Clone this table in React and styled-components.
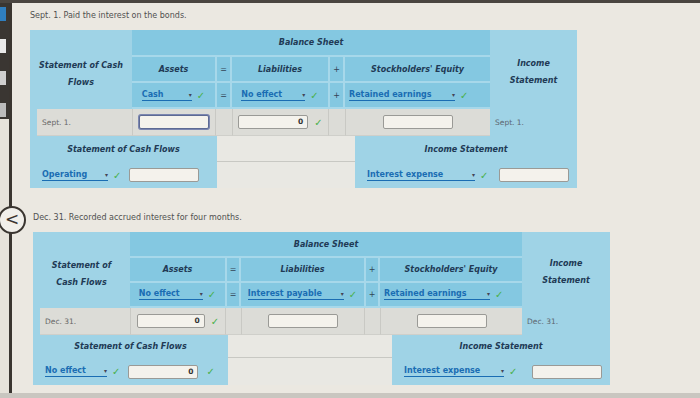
import React from "react";
import styled, { createGlobalStyle } from "styled-components";

const GlobalStyle = createGlobalStyle`
  html, body {
    margin: 0;
    padding: 0;
    background: #ebe8e1;
    font-family: "DejaVu Sans", Verdana, sans-serif;
  }
`;

function Dropdown({ label, width }) {
  return (
    <DropWrap>
      <DropLink style={{ width }}>
        <span>{label}</span>
        <Arrow>▾</Arrow>
      </DropLink>
      <Check>✓</Check>
    </DropWrap>
  );
}

function Table({ t }) {
  return (
    <Block>
      <Caption>{t.caption}</Caption>
      <Panel style={{ width: t.width }}>
        <Grid $cols={t.cols} $rows={t.rows}>
          <SideHead>
            {t.scfTitle.map((line) => (
              <div key={line}>{line}</div>
            ))}
          </SideHead>
          <BandHead>Balance Sheet</BandHead>
          <IncomeHead>
            <div>Income</div>
            <div>Statement</div>
          </IncomeHead>

          <HeadCell>Assets</HeadCell>
          <OpCell>=</OpCell>
          <HeadCell>Liabilities</HeadCell>
          <OpCell>+</OpCell>
          <HeadCell>Stockholders' Equity</HeadCell>

          <PickCell>
            <Dropdown label={t.assets} width={t.dw[0]} />
          </PickCell>
          <OpCell>=</OpCell>
          <PickCell>
            <Dropdown label={t.liab} width={t.dw[1]} />
          </PickCell>
          <OpCell>+</OpCell>
          <PickCell $left>
            <Dropdown label="Retained earnings" width={t.dw[2]} />
          </PickCell>

          <DateCell>{t.date}</DateCell>
          <GrayCell>
            <Field $w={t.iw[0]} $focus={t.focus}>{t.vals[0]}</Field>
            {t.vals[0] && <Check>✓</Check>}
          </GrayCell>
          <GrayCell />
          <GrayCell>
            <Field $w={t.iw[1]}>{t.vals[1]}</Field>
            {t.vals[1] && <Check>✓</Check>}
          </GrayCell>
          <GrayCell />
          <GrayCell>
            <Field $w={t.iw[2]} />
          </GrayCell>
          <IncomeDate>{t.date}</IncomeDate>
        </Grid>

        <Bottom $cols={t.bcols} $rows={t.brows}>
          <BlueSection $rows={t.brows}>
            <SubTitle>Statement of Cash Flows</SubTitle>
            <SectionRow>
              <Dropdown label={t.scf} width={t.dw[3]} />
              <Field $w={70}>{t.vals[2]}</Field>
              {t.vals[2] && <Check>✓</Check>}
            </SectionRow>
          </BlueSection>
          <BlankSection $rows={t.brows}>
            <BlankRow />
            <BlankRow />
          </BlankSection>
          <BlueSection $rows={t.brows}>
            <SubTitle>Income Statement</SubTitle>
            <SectionRow $spread>
              <Dropdown label="Interest expense" width={t.dw[4]} />
              <Field $w={70} />
            </SectionRow>
          </BlueSection>
        </Bottom>
      </Panel>
    </Block>
  );
}

const tables = [
  {
    caption: "Sept. 1. Paid the interest on the bonds.",
    width: 547,
    cols: "102px 83px 17px 96px 17px 145px 87px",
    rows: "27px 26px 26px 27px",
    bcols: "187px 138px 222px",
    brows: "26px 26px",
    scfTitle: ["Statement of Cash", "Flows"],
    assets: "Cash",
    liab: "No effect",
    scf: "Operating",
    date: "Sept. 1.",
    dw: [50, 64, 106, 66, 108],
    iw: [70, 70, 70],
    vals: ["", "0", ""],
    focus: true,
  },
  {
    caption: "Dec. 31. Recorded accrued interest for four months.",
    width: 577,
    cols: "97px 95px 16px 123px 16px 142px 88px",
    rows: "26px 25px 25px 27px",
    bcols: "195px 164px 218px",
    brows: "23px 27px",
    scfTitle: ["Statement of", "Cash Flows"],
    assets: "No effect",
    liab: "Interest payable",
    scf: "No effect",
    date: "Dec. 31.",
    dw: [64, 96, 106, 62, 100],
    iw: [68, 70, 70],
    vals: ["0", "", "0"],
  },
];

export default function App() {
  return (
    <Screen>
      <GlobalStyle />
      <Rail>
        <RailTop>
          <RailMark $c="#2f7fc0" />
          <RailMark $c="#e9e9e9" />
          <RailMark $c="#cfcfcf" />
          <RailMark $c="#bcbcbc" />
        </RailTop>
        <BackButton>&lt;</BackButton>
      </Rail>
      <Content>
        {tables.map((t) => (
          <Table key={t.caption} t={t} />
        ))}
      </Content>
      <BottomBand />
    </Screen>
  );
}

const Screen = styled.div`
  position: relative;
  width: 700px;
  height: 398px;
  overflow: hidden;
  display: flex;
  border-top: 3px solid #4a4540;
  box-sizing: border-box;
`;

const Rail = styled.div`
  position: relative;
  width: 9px;
  flex: none;
  border-right: 3px solid #3a3530;
  background: #e6e2da;
`;

const RailTop = styled.div`
  height: 112px;
  background: #3a3632;
  display: flex;
  flex-direction: column;
  gap: 18px;
  padding-top: 4px;
`;

const RailMark = styled.div`
  width: 6px;
  height: 14px;
  background: ${(p) => p.$c};
`;

const BackButton = styled.div`
  position: absolute;
  left: -2px;
  top: 203px;
  width: 24px;
  height: 24px;
  border-radius: 50%;
  border: 2px solid #3a3530;
  background: #f1efea;
  color: #3a3530;
  font-size: 17px;
  line-height: 23px;
  text-align: center;
  z-index: 2;
`;

const Content = styled.div`
  padding: 6px 0 0 18px;
  display: flex;
  flex-direction: column;
  gap: 23px;
`;

const BottomBand = styled.div`
  position: absolute;
  left: 0;
  right: 0;
  bottom: 0;
  height: 5px;
  background: #c9c6c0;
`;

const Block = styled.div`
  display: flex;
  flex-direction: column;
  &:nth-child(2) {
    padding-left: 3px;
  }
`;

const Caption = styled.div`
  font-size: 8px;
  color: #505050;
  height: 21px;
  line-height: 14px;
`;

const Panel = styled.div`
  background: #9fd3e6;
  color: #213a55;
`;

const Grid = styled.div`
  display: grid;
  grid-template-columns: ${(p) => p.$cols};
  grid-template-rows: ${(p) => p.$rows};
`;

const headText = `
  font-weight: bold;
  font-style: italic;
  font-size: 8px;
  color: #213a55;
`;

const SideHead = styled.div`
  ${headText}
  grid-row: 1 / 4;
  display: flex;
  flex-direction: column;
  justify-content: center;
  align-items: center;
  line-height: 17px;
  padding-top: 8px;
`;

const BandHead = styled.div`
  ${headText}
  grid-column: 2 / 7;
  background: #84c8e1;
  display: flex;
  align-items: center;
  justify-content: center;
  border-bottom: 2px solid #a7d8ea;
`;

const IncomeHead = styled.div`
  ${headText}
  grid-column: 7;
  grid-row: 1 / 4;
  display: flex;
  flex-direction: column;
  justify-content: center;
  align-items: center;
  line-height: 17px;
  padding-top: 4px;
`;

const HeadCell = styled.div`
  ${headText}
  background: #84c8e1;
  display: flex;
  align-items: center;
  justify-content: center;
  border-bottom: 2px solid #a7d8ea;
`;

const OpCell = styled.div`
  background: #84c8e1;
  border-left: 2px solid #a7d8ea;
  border-right: 2px solid #a7d8ea;
  border-bottom: 2px solid #a7d8ea;
  font-size: 8px;
  color: #345;
  display: flex;
  align-items: center;
  justify-content: center;
`;

const PickCell = styled.div`
  background: #84c8e1;
  border-bottom: 2px solid #a7d8ea;
  display: flex;
  align-items: center;
  justify-content: ${(p) => (p.$left ? "flex-start" : "center")};
  padding-left: ${(p) => (p.$left ? "4px" : "0")};
`;

const DateCell = styled.div`
  background: #dcdcd7;
  margin-left: 7px;
  font-size: 7.5px;
  color: #666;
  display: flex;
  align-items: center;
  padding-left: 5px;
  border-bottom: 1px solid #cfcfca;
`;

const GrayCell = styled.div`
  background: #dcdcd7;
  border-left: 1px solid #c9c9c4;
  border-bottom: 1px solid #cfcfca;
  display: flex;
  align-items: center;
  justify-content: center;
  gap: 6px;
`;

const IncomeDate = styled.div`
  font-size: 7.5px;
  color: #5b6670;
  display: flex;
  align-items: center;
  padding-left: 5px;
`;

const Bottom = styled.div`
  display: grid;
  grid-template-columns: ${(p) => p.$cols};
`;

const BlueSection = styled.div`
  display: grid;
  grid-template-rows: ${(p) => p.$rows};
`;

const SubTitle = styled.div`
  ${headText}
  display: flex;
  align-items: center;
  justify-content: center;
`;

const SectionRow = styled.div`
  display: flex;
  align-items: center;
  gap: 8px;
  padding: 0 8px 0 12px;
  justify-content: ${(p) => (p.$spread ? "space-between" : "flex-start")};
`;

const BlankSection = styled.div`
  display: grid;
  grid-template-rows: ${(p) => p.$rows};
  background: #e9e8e3;
`;

const BlankRow = styled.div`
  border-bottom: 1px solid #c8c8c3;
  &:last-child {
    border-bottom: none;
  }
`;

const DropWrap = styled.div`
  display: flex;
  align-items: center;
  gap: 5px;
`;

const DropLink = styled.div`
  display: flex;
  align-items: center;
  justify-content: space-between;
  color: #1a6db3;
  font-weight: bold;
  font-size: 8px;
  border-bottom: 1.5px solid #1a6db3;
  line-height: 10px;
`;

const Arrow = styled.span`
  font-size: 6px;
  color: #445;
`;

const Check = styled.span`
  color: #49b04a;
  font-size: 10px;
  font-weight: bold;
`;

const Field = styled.div`
  width: ${(p) => p.$w}px;
  height: 14px;
  box-sizing: border-box;
  background: #f4f2ec;
  border: 1px solid ${(p) => (p.$focus ? "#5d6a93" : "#9a9a96")};
  box-shadow: ${(p) => (p.$focus ? "0 0 0 1px #7b86b0" : "none")};
  border-radius: 2px;
  font-size: 7.5px;
  font-weight: bold;
  color: #333;
  text-align: right;
  padding-right: 4px;
  line-height: 12px;
`;
